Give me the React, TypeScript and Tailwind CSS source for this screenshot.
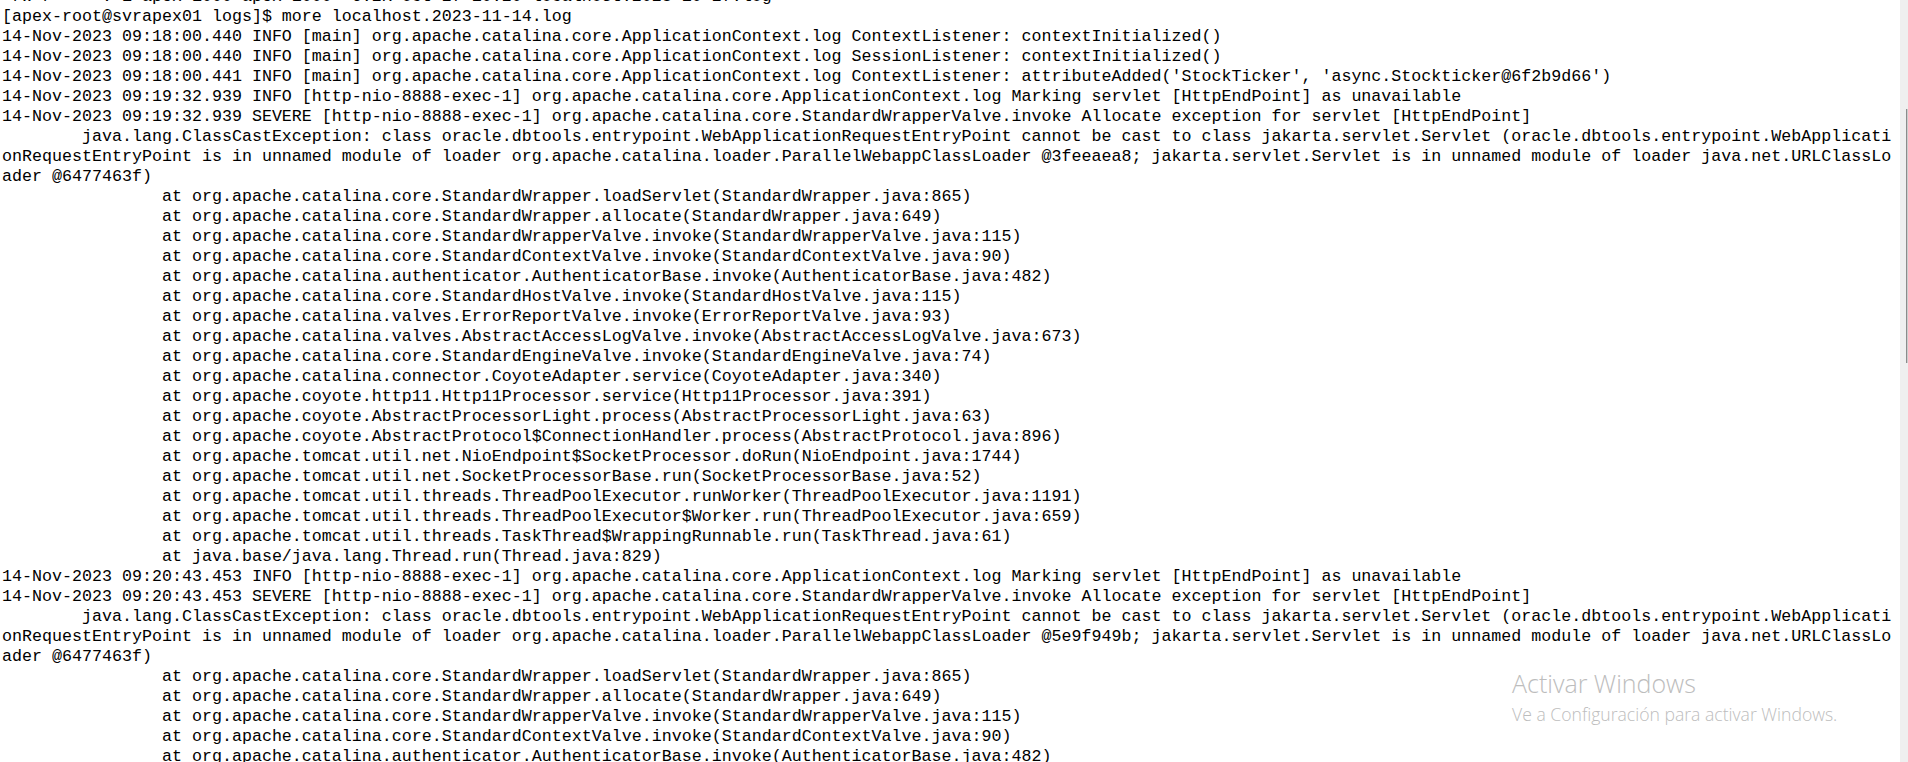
const T = "        ";
const AT = T + T + "at ";

const lines: string[] = [
  "-rw-r-----. 1 apex 1000 apex 1000  6.2K Oct 27 10:20 localhost.2023-10-27.log",
  "[apex-root@svrapex01 logs]$ more localhost.2023-11-14.log",
  "14-Nov-2023 09:18:00.440 INFO [main] org.apache.catalina.core.ApplicationContext.log ContextListener: contextInitialized()",
  "14-Nov-2023 09:18:00.440 INFO [main] org.apache.catalina.core.ApplicationContext.log SessionListener: contextInitialized()",
  "14-Nov-2023 09:18:00.441 INFO [main] org.apache.catalina.core.ApplicationContext.log ContextListener: attributeAdded('StockTicker', 'async.Stockticker@6f2b9d66')",
  "14-Nov-2023 09:19:32.939 INFO [http-nio-8888-exec-1] org.apache.catalina.core.ApplicationContext.log Marking servlet [HttpEndPoint] as unavailable",
  "14-Nov-2023 09:19:32.939 SEVERE [http-nio-8888-exec-1] org.apache.catalina.core.StandardWrapperValve.invoke Allocate exception for servlet [HttpEndPoint]",
  T + "java.lang.ClassCastException: class oracle.dbtools.entrypoint.WebApplicationRequestEntryPoint cannot be cast to class jakarta.servlet.Servlet (oracle.dbtools.entrypoint.WebApplicati",
  "onRequestEntryPoint is in unnamed module of loader org.apache.catalina.loader.ParallelWebappClassLoader @3feeaea8; jakarta.servlet.Servlet is in unnamed module of loader java.net.URLClassLo",
  "ader @6477463f)",
  AT + "org.apache.catalina.core.StandardWrapper.loadServlet(StandardWrapper.java:865)",
  AT + "org.apache.catalina.core.StandardWrapper.allocate(StandardWrapper.java:649)",
  AT + "org.apache.catalina.core.StandardWrapperValve.invoke(StandardWrapperValve.java:115)",
  AT + "org.apache.catalina.core.StandardContextValve.invoke(StandardContextValve.java:90)",
  AT + "org.apache.catalina.authenticator.AuthenticatorBase.invoke(AuthenticatorBase.java:482)",
  AT + "org.apache.catalina.core.StandardHostValve.invoke(StandardHostValve.java:115)",
  AT + "org.apache.catalina.valves.ErrorReportValve.invoke(ErrorReportValve.java:93)",
  AT + "org.apache.catalina.valves.AbstractAccessLogValve.invoke(AbstractAccessLogValve.java:673)",
  AT + "org.apache.catalina.core.StandardEngineValve.invoke(StandardEngineValve.java:74)",
  AT + "org.apache.catalina.connector.CoyoteAdapter.service(CoyoteAdapter.java:340)",
  AT + "org.apache.coyote.http11.Http11Processor.service(Http11Processor.java:391)",
  AT + "org.apache.coyote.AbstractProcessorLight.process(AbstractProcessorLight.java:63)",
  AT + "org.apache.coyote.AbstractProtocol$ConnectionHandler.process(AbstractProtocol.java:896)",
  AT + "org.apache.tomcat.util.net.NioEndpoint$SocketProcessor.doRun(NioEndpoint.java:1744)",
  AT + "org.apache.tomcat.util.net.SocketProcessorBase.run(SocketProcessorBase.java:52)",
  AT + "org.apache.tomcat.util.threads.ThreadPoolExecutor.runWorker(ThreadPoolExecutor.java:1191)",
  AT + "org.apache.tomcat.util.threads.ThreadPoolExecutor$Worker.run(ThreadPoolExecutor.java:659)",
  AT + "org.apache.tomcat.util.threads.TaskThread$WrappingRunnable.run(TaskThread.java:61)",
  AT + "java.base/java.lang.Thread.run(Thread.java:829)",
  "14-Nov-2023 09:20:43.453 INFO [http-nio-8888-exec-1] org.apache.catalina.core.ApplicationContext.log Marking servlet [HttpEndPoint] as unavailable",
  "14-Nov-2023 09:20:43.453 SEVERE [http-nio-8888-exec-1] org.apache.catalina.core.StandardWrapperValve.invoke Allocate exception for servlet [HttpEndPoint]",
  T + "java.lang.ClassCastException: class oracle.dbtools.entrypoint.WebApplicationRequestEntryPoint cannot be cast to class jakarta.servlet.Servlet (oracle.dbtools.entrypoint.WebApplicati",
  "onRequestEntryPoint is in unnamed module of loader org.apache.catalina.loader.ParallelWebappClassLoader @5e9f949b; jakarta.servlet.Servlet is in unnamed module of loader java.net.URLClassLo",
  "ader @6477463f)",
  AT + "org.apache.catalina.core.StandardWrapper.loadServlet(StandardWrapper.java:865)",
  AT + "org.apache.catalina.core.StandardWrapper.allocate(StandardWrapper.java:649)",
  AT + "org.apache.catalina.core.StandardWrapperValve.invoke(StandardWrapperValve.java:115)",
  AT + "org.apache.catalina.core.StandardContextValve.invoke(StandardContextValve.java:90)",
  AT + "org.apache.catalina.authenticator.AuthenticatorBase.invoke(AuthenticatorBase.java:482)",
];

function Scrollbar() {
  return (
    <div className="flex h-full w-[8px] shrink-0 flex-col bg-[#efefef]">
      <div className="h-[109px]" />
      <div className="ml-[6px] h-[254px] w-[2px] border-l border-[#8b8b8b] bg-[#cdcdcd]" />
    </div>
  );
}

export default function App() {
  return (
    <div className="relative flex h-[762px] w-[1908px] overflow-hidden bg-white">
      <div className="flex-1 overflow-hidden">
        <pre
          className="-mt-[13px] pl-[2px] text-[16.66px] leading-[20px] text-black"
          style={{ fontFamily: '"Liberation Mono", "Courier New", monospace' }}
        >
          {lines.map((l, i) => (
            <div key={i} className="h-[20px] whitespace-pre">
              {l}
            </div>
          ))}
        </pre>
      </div>
      <Scrollbar />

      {/* windows activation watermark */}
      <div
        className="absolute left-[1512px] top-[668px] text-[#bdbdbd]"
        style={{ fontFamily: '"Open Sans", "Noto Sans", sans-serif' }}
      >
        <div className="text-[25px] font-light leading-[30px]">Activar Windows</div>
        <div className="mt-[3px] text-[17.6px] font-light leading-[26px]">
          Ve a Configuración para activar Windows.
        </div>
      </div>
    </div>
  );
}
